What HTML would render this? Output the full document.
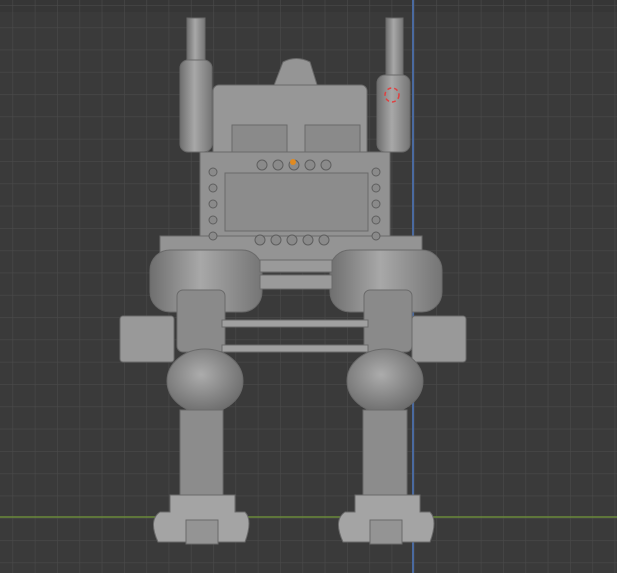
<!DOCTYPE html>
<html><head><meta charset="utf-8"><style>
html,body{margin:0;padding:0;background:#3a3a3a;overflow:hidden}
svg{display:block}
</style></head><body>
<svg width="617" height="573" viewBox="0 0 617 573" xmlns="http://www.w3.org/2000/svg">
<defs>
<pattern id="g" x="12.5" y="5" width="22.3" height="22.3" patternUnits="userSpaceOnUse">
<path d="M0 0V22.3M0 0H22.3" stroke="#4a4a4a" stroke-width="1.2" fill="none"/>
</pattern>
<linearGradient id="cyl" x1="0" x2="1"><stop offset="0" stop-color="#6f6f6f"/><stop offset=".45" stop-color="#a8a8a8"/><stop offset="1" stop-color="#757575"/></linearGradient>
<radialGradient id="ball" cx=".45" cy=".4" r=".6"><stop offset="0" stop-color="#acacac"/><stop offset="1" stop-color="#6e6e6e"/></radialGradient>
</defs>
<rect width="617" height="573" fill="#3a3a3a"/>
<rect width="617" height="12" fill="#363636"/>
<rect width="617" height="573" fill="url(#g)"/>
<line x1="0" y1="517" x2="617" y2="517" stroke="#6a8a3a" stroke-width="1.5"/>
<line x1="413" y1="0" x2="413" y2="573" stroke="#4a6aa0" stroke-width="2"/>
<g fill="#8e8e8e" stroke="#6a6a6a" stroke-width="1">
<!-- barrels -->
<rect x="187" y="18" width="18" height="80" fill="url(#cyl)"/>
<rect x="386" y="18" width="17" height="72" fill="url(#cyl)"/>
<rect x="180" y="60" width="32" height="92" rx="8" fill="url(#cyl)"/>
<rect x="377" y="75" width="33" height="77" rx="8" fill="url(#cyl)"/>
<!-- head -->
<path d="M273 88 L283 62 Q296 55 310 62 L318 88Z" fill="#959595"/>
<rect x="213" y="85" width="154" height="72" rx="6" fill="#979797"/>
<rect x="232" y="125" width="55" height="28" fill="#8a8a8a"/>
<rect x="305" y="125" width="55" height="28" fill="#8a8a8a"/>
<!-- main box -->
<rect x="200" y="152" width="190" height="100" fill="#929292"/>
<rect x="225" y="173" width="143" height="58" fill="#8c8c8c"/>
<rect x="160" y="236" width="262" height="24" fill="#949494"/>
<!-- hips -->
<rect x="150" y="250" width="112" height="62" rx="20" fill="url(#cyl)"/>
<rect x="330" y="250" width="112" height="62" rx="20" fill="url(#cyl)"/>
<rect x="260" y="260" width="72" height="12" fill="#9a9a9a"/>
<rect x="260" y="275" width="72" height="14" fill="#9a9a9a"/>
<!-- knees -->
<rect x="177" y="290" width="48" height="62" rx="6" fill="#8a8a8a"/>
<rect x="364" y="290" width="48" height="62" rx="6" fill="#8a8a8a"/>
<rect x="120" y="316" width="54" height="46" rx="3" fill="#999"/>
<rect x="412" y="316" width="54" height="46" rx="3" fill="#999"/>
<rect x="222" y="320" width="146" height="7" fill="#a0a0a0"/>
<rect x="222" y="345" width="146" height="7" fill="#a0a0a0"/>
<!-- balls -->
<ellipse cx="205" cy="381" rx="38" ry="32" fill="url(#ball)"/>
<ellipse cx="385" cy="381" rx="38" ry="32" fill="url(#ball)"/>
<!-- legs -->
<rect x="180" y="410" width="43" height="100" fill="#8c8c8c"/>
<rect x="363" y="410" width="44" height="100" fill="#8c8c8c"/>
<!-- feet -->
<path d="M170 495 H235 V512 H245 Q253 520 245 542 H158 Q148 520 160 512 H170Z" fill="#a4a4a4"/>
<path d="M355 495 H420 V512 H430 Q438 520 430 542 H343 Q333 520 345 512 H355Z" fill="#a4a4a4"/>
<rect x="186" y="520" width="32" height="24" fill="#949494"/>
<rect x="370" y="520" width="32" height="24" fill="#949494"/>
</g>
<g fill="#8a8a8a" stroke="#5e5e5e">
<circle cx="262" cy="165" r="5"/><circle cx="278" cy="165" r="5"/><circle cx="294" cy="165" r="5"/><circle cx="310" cy="165" r="5"/><circle cx="326" cy="165" r="5"/>
<circle cx="260" cy="240" r="5"/><circle cx="276" cy="240" r="5"/><circle cx="292" cy="240" r="5"/><circle cx="308" cy="240" r="5"/><circle cx="324" cy="240" r="5"/>
<circle cx="213" cy="172" r="4"/><circle cx="213" cy="188" r="4"/><circle cx="213" cy="204" r="4"/><circle cx="213" cy="220" r="4"/><circle cx="213" cy="236" r="4"/>
<circle cx="376" cy="172" r="4"/><circle cx="376" cy="188" r="4"/><circle cx="376" cy="204" r="4"/><circle cx="376" cy="220" r="4"/><circle cx="376" cy="236" r="4"/>
</g>
<circle cx="293" cy="162" r="3" fill="#e08a20"/>
<circle cx="392" cy="95" r="7" fill="none" stroke="#e04040" stroke-width="1.5" stroke-dasharray="4 3"/>
</svg>
</body></html>
